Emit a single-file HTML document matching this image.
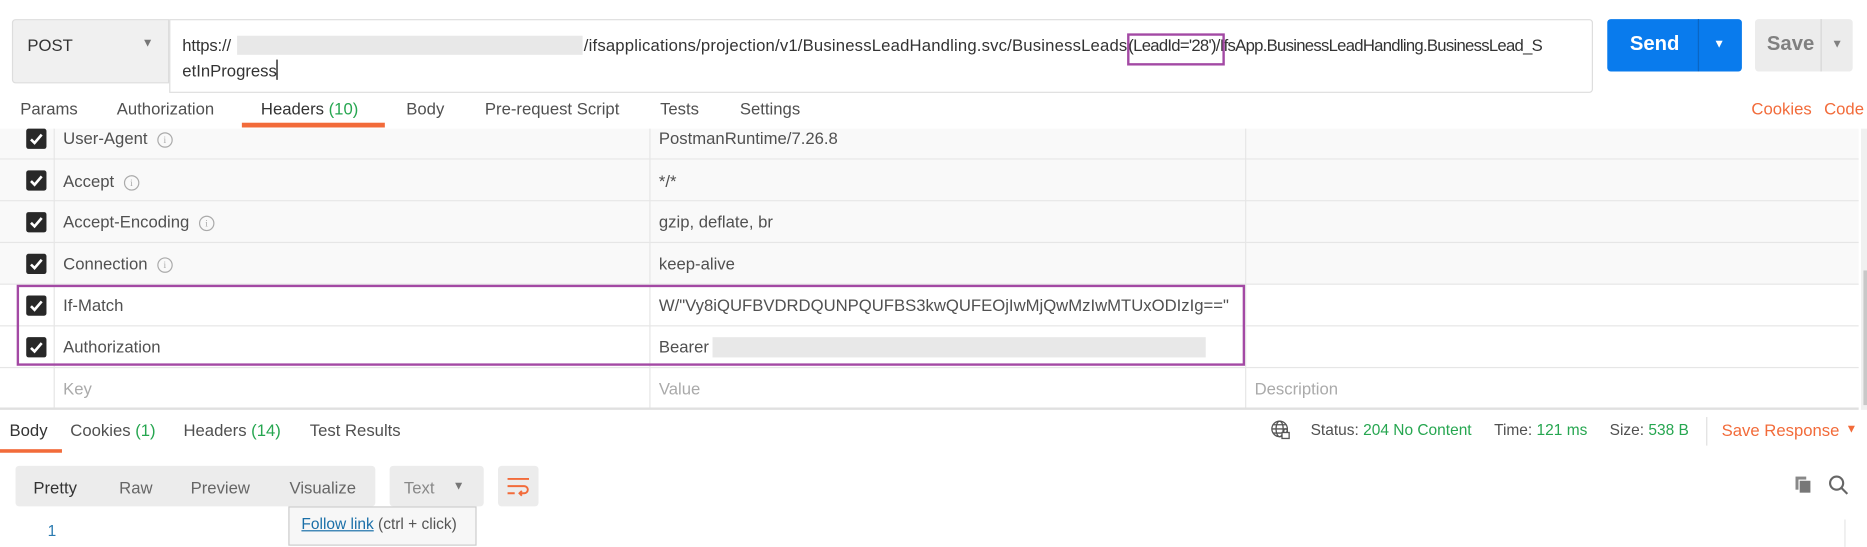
<!DOCTYPE html>
<html><head><meta charset="utf-8"><style>
html,body{margin:0;padding:0;background:#fff;overflow:hidden;width:1867px;height:547px}
#w{position:absolute;left:0;top:0;width:1567px;height:459px;transform:scale(1.19145);transform-origin:0 0;font-family:"Liberation Sans",sans-serif;font-size:14px;color:#505050}
.a{position:absolute;white-space:nowrap}
.cb{position:absolute;left:22px;width:17px;height:17px;background:#282828;border-radius:2px}
.cb svg{position:absolute;left:2px;top:2px}
.row{position:absolute;left:0;width:1560px;height:35px;border-bottom:1px solid #e6e6e6;box-sizing:border-box}
.i{display:inline-block;width:11px;height:11px;border:1px solid #aaa;border-radius:50%;font-size:8px;line-height:11px;text-align:center;color:#aaa;margin-left:8px;vertical-align:1px;font-family:"Liberation Serif",serif}
.g{color:#26a650}
.o{color:#f26b3a}
</style></head><body><div id="w">
<!-- method -->
<div class="a" style="left:10px;top:16px;width:132px;height:54px;background:#f0f0f0;border:1px solid #ddd;border-radius:3px 0 0 3px;box-sizing:border-box"></div>
<div class="a" style="left:23px;top:30px;color:#333;font-size:14px">POST</div>
<div class="a" style="left:119px;top:31px;color:#777;font-size:10px">▼</div>
<!-- url -->
<div class="a" style="left:142px;top:16px;width:1195px;height:62px;border:1px solid #ddd;border-radius:0 3px 3px 0;box-sizing:border-box"></div>
<div class="a" style="left:199px;top:30px;width:290px;height:16px;background:#e8e8e8"></div>
<div class="a" style="left:153px;top:30px;color:#333;font-size:14px;letter-spacing:-0.15px">https://</div>
<div class="a" style="left:490px;top:30px;color:#333;font-size:14px;letter-spacing:0.15px">/ifsapplications/projection/v1/BusinessLeadHandling.svc/BusinessLeads</div>
<div class="a" style="left:947px;top:30px;color:#333;font-size:14px;letter-spacing:-0.6px">(LeadId='28')/IfsApp.BusinessLeadHandling.BusinessLead_S</div>
<div class="a" style="left:153px;top:50px;color:#333;font-size:14px">etInProgress<span style="display:inline-block;width:1px;height:17px;background:#000;vertical-align:-3px"></span></div>
<div class="a" style="left:946px;top:28px;width:82px;height:27px;border:2px solid #a349a4;box-sizing:border-box"></div>
<!-- send/save -->
<div class="a" style="left:1349px;top:16px;width:113px;height:44px;background:#097bed;border-radius:3px"></div>
<div class="a" style="left:1425px;top:16px;width:1px;height:44px;background:#0a66c4"></div>
<div class="a" style="left:1368px;top:27px;color:#fff;font-size:17px;font-weight:bold">Send</div>
<div class="a" style="left:1438px;top:32px;color:#fff;font-size:10px">▼</div>
<div class="a" style="left:1473px;top:16px;width:82px;height:44px;background:#ececec;border-radius:3px"></div>
<div class="a" style="left:1528px;top:16px;width:1px;height:44px;background:#d6d6d6"></div>
<div class="a" style="left:1483px;top:27px;color:#808080;font-size:17px;font-weight:bold">Save</div>
<div class="a" style="left:1537px;top:32px;color:#808080;font-size:10px">▼</div>
<!-- tabs -->
<div class="a" style="left:17px;top:83px">Params</div>
<div class="a" style="left:98px;top:83px">Authorization</div>
<div class="a" style="left:219px;top:83px;color:#333">Headers <span class="g">(10)</span></div>
<div class="a" style="left:341px;top:83px">Body</div>
<div class="a" style="left:407px;top:83px">Pre-request Script</div>
<div class="a" style="left:554px;top:83px">Tests</div>
<div class="a" style="left:621px;top:83px">Settings</div>
<div class="a" style="left:203px;top:103px;width:120px;height:4px;background:#f26b3a"></div>
<div class="a o" style="left:1470px;top:83px">Cookies</div>
<div class="a o" style="left:1531px;top:83px">Code</div>
<!-- table -->
<div class="row" style="top:108px;height:26px;background:#f9f9f9"></div>
<div class="row" style="top:134px;background:#f9f9f9"></div>
<div class="row" style="top:169px;background:#f9f9f9"></div>
<div class="row" style="top:204px;background:#f9f9f9"></div>
<div class="row" style="top:239px"></div>
<div class="row" style="top:274px"></div>
<div class="row" style="top:309px;height:35px;border-bottom:2px solid #e0e0e0"></div>
<div class="a" style="left:45px;top:108px;width:1px;height:234px;background:#e6e6e6"></div>
<div class="a" style="left:545px;top:108px;width:1px;height:234px;background:#e6e6e6"></div>
<div class="a" style="left:1045px;top:108px;width:1px;height:234px;background:#e6e6e6"></div>
<div class="a" style="left:1562px;top:108px;width:5px;height:236px;background:#f0f0f0"></div>
<div class="a" style="left:1564px;top:227px;width:3px;height:113px;background:#c8c8c8"></div>

<div class="cb" style="top:108px"><svg width="13" height="13" viewBox="0 0 13 13"><path d="M2 7l3 3 6-7" stroke="#fff" stroke-width="2.2" fill="none"/></svg></div>
<div class="a" style="left:53px;top:108px">User-Agent<span class="i">i</span></div>
<div class="a" style="left:553px;top:108px">PostmanRuntime/7.26.8</div>

<div class="cb" style="top:143px"><svg width="13" height="13" viewBox="0 0 13 13"><path d="M2 7l3 3 6-7" stroke="#fff" stroke-width="2.2" fill="none"/></svg></div>
<div class="a" style="left:53px;top:144px">Accept<span class="i">i</span></div>
<div class="a" style="left:553px;top:144px">*/*</div>

<div class="cb" style="top:178px"><svg width="13" height="13" viewBox="0 0 13 13"><path d="M2 7l3 3 6-7" stroke="#fff" stroke-width="2.2" fill="none"/></svg></div>
<div class="a" style="left:53px;top:178px">Accept-Encoding<span class="i">i</span></div>
<div class="a" style="left:553px;top:178px">gzip, deflate, br</div>

<div class="cb" style="top:213px"><svg width="13" height="13" viewBox="0 0 13 13"><path d="M2 7l3 3 6-7" stroke="#fff" stroke-width="2.2" fill="none"/></svg></div>
<div class="a" style="left:53px;top:213px">Connection<span class="i">i</span></div>
<div class="a" style="left:553px;top:213px">keep-alive</div>

<div class="cb" style="top:248px"><svg width="13" height="13" viewBox="0 0 13 13"><path d="M2 7l3 3 6-7" stroke="#fff" stroke-width="2.2" fill="none"/></svg></div>
<div class="a" style="left:53px;top:248px">If-Match</div>
<div class="a" style="left:553px;top:248px">W/"Vy8iQUFBVDRDQUNPQUFBS3kwQUFEOjIwMjQwMzIwMTUxODIzIg=="</div>

<div class="cb" style="top:283px"><svg width="13" height="13" viewBox="0 0 13 13"><path d="M2 7l3 3 6-7" stroke="#fff" stroke-width="2.2" fill="none"/></svg></div>
<div class="a" style="left:53px;top:283px">Authorization</div>
<div class="a" style="left:553px;top:283px">Bearer</div>
<div class="a" style="left:598px;top:283px;width:414px;height:17px;background:#e8e8e8"></div>

<div class="a" style="left:53px;top:318px;color:#aaa">Key</div>
<div class="a" style="left:553px;top:318px;color:#aaa">Value</div>
<div class="a" style="left:1053px;top:318px;color:#aaa">Description</div>

<div class="a" style="left:14px;top:239px;width:1031px;height:68px;border:2px solid #a349a4;box-sizing:border-box"></div>

<!-- response tabs -->
<div class="a" style="left:8px;top:353px;color:#333">Body</div>
<div class="a" style="left:59px;top:353px">Cookies <span class="g">(1)</span></div>
<div class="a" style="left:154px;top:353px">Headers <span class="g">(14)</span></div>
<div class="a" style="left:260px;top:353px">Test Results</div>
<div class="a" style="left:0;top:377px;width:52px;height:3px;background:#f26b3a"></div>

<svg class="a" style="left:1066px;top:352px" width="18" height="18" viewBox="0 0 18 18" fill="none" stroke="#555" stroke-width="1.1"><circle cx="8" cy="8" r="6.5"/><ellipse cx="8" cy="8" rx="3" ry="6.5"/><path d="M1.5 8h13M2.5 4.5h11M2.5 11.5h7"/><rect x="10" y="11" width="6" height="5" fill="#fff"/><path d="M11.5 11v-1.5a1.5 1.5 0 013 0V11"/></svg>
<div class="a" style="left:1100px;top:353px;font-size:13px">Status: <span class="g">204 No Content</span></div>
<div class="a" style="left:1254px;top:353px;font-size:13px">Time: <span class="g">121 ms</span></div>
<div class="a" style="left:1351px;top:353px;font-size:13px">Size: <span class="g">538 B</span></div>
<div class="a" style="left:1432px;top:350px;width:1px;height:24px;background:#e0e0e0"></div>
<div class="a o" style="left:1445px;top:353px">Save Response</div>
<div class="a o" style="left:1549px;top:355px;font-size:10px">▼</div>

<!-- toolbar -->
<div class="a" style="left:13px;top:391px;width:302px;height:34px;background:#ececec;border-radius:3px"></div>
<div class="a" style="left:28px;top:401px;color:#333">Pretty</div>
<div class="a" style="left:100px;top:401px;color:#666">Raw</div>
<div class="a" style="left:160px;top:401px;color:#666">Preview</div>
<div class="a" style="left:243px;top:401px;color:#666">Visualize</div>
<div class="a" style="left:327px;top:391px;width:79px;height:34px;background:#ececec;border-radius:3px"></div>
<div class="a" style="left:339px;top:401px;color:#888">Text</div>
<div class="a" style="left:380px;top:403px;color:#777;font-size:10px">▼</div>
<div class="a" style="left:418px;top:391px;width:34px;height:34px;background:#ececec;border-radius:3px"></div>
<svg class="a" style="left:425px;top:399px" width="20" height="18" viewBox="0 0 20 18" fill="none" stroke="#f26b3a" stroke-width="1.6"><path d="M1 3h18M1 9h14a3 3 0 010 6h-4M1 15h6"/><path d="M13 13l-2 2 2 2"/></svg>
<svg class="a" style="left:1506px;top:399px" width="16" height="16" viewBox="0 0 16 16"><rect x="1" y="1" width="9" height="11" fill="#888"/><rect x="4" y="4" width="10" height="11" fill="#777" stroke="#fff" stroke-width="1"/></svg>
<svg class="a" style="left:1534px;top:398px" width="18" height="18" viewBox="0 0 18 18" fill="none" stroke="#666" stroke-width="1.8"><circle cx="7.5" cy="7.5" r="5.5"/><path d="M11.5 11.5l5 5"/></svg>

<div class="a" style="left:40px;top:438px;color:#2a7ab0;font-size:13px">1</div>
<div class="a" style="left:1548px;top:436px;width:1px;height:23px;background:#e6e6e6"></div>
<div class="a" style="left:242px;top:425px;width:158px;height:33px;background:#f7f7f7;border:1px solid #ccc;box-sizing:border-box"></div>
<div class="a" style="left:253px;top:432px;font-size:13px;color:#555"><span style="color:#1a6fa8;text-decoration:underline">Follow link</span> (ctrl + click)</div>
</div></body></html>
